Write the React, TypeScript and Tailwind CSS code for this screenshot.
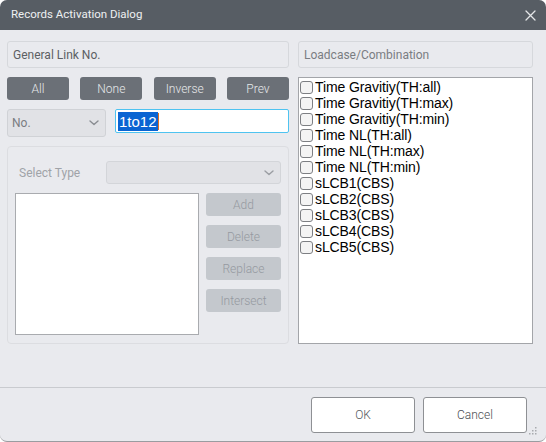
import React from "react";

const items = [
  "Time Gravitiy(TH:all)",
  "Time Gravitiy(TH:max)",
  "Time Gravitiy(TH:min)",
  "Time NL(TH:all)",
  "Time NL(TH:max)",
  "Time NL(TH:min)",
  "sLCB1(CBS)",
  "sLCB2(CBS)",
  "sLCB3(CBS)",
  "sLCB4(CBS)",
  "sLCB5(CBS)",
];

function Chevron({ color = "#8a8d92" }: { color?: string }) {
  return (
    <svg width="10" height="6" viewBox="0 0 10 6" fill="none">
      <path d="M1 1 L5 4.5 L9 1" stroke={color} strokeWidth="1.4" strokeLinecap="round" strokeLinejoin="round" />
    </svg>
  );
}

export default function App() {
  const ui = { fontFamily: 'Roboto, "Noto Sans", sans-serif' };
  const list = { fontFamily: '"Liberation Sans", Arial, sans-serif' };
  return (
    <div className="w-[546px] h-[442px] bg-white">
      <div
        className="w-[546px] h-[442px] bg-[#e9eaee] rounded-[7px] overflow-hidden flex flex-col relative border-b border-[#9a9ca0]"
        style={ui}
      >
        {/* Title bar */}
        <div className="h-[30px] bg-[#575d64] flex items-center justify-between pl-[11px] pr-[10px] shrink-0">
          <span className="text-[11.5px] text-[#eef0f2] leading-none">Records Activation Dialog</span>
          <svg width="11" height="11" viewBox="0 0 11 11">
            <path d="M1 1 L10 10 M10 1 L1 10" stroke="#e4e6e8" strokeWidth="1.3" strokeLinecap="round" />
          </svg>
        </div>

        {/* Body */}
        <div className="flex pl-[7px] pt-[11px] gap-[9px] h-[357px] shrink-0">
          {/* Left column */}
          <div className="w-[282px] flex flex-col">
            <div className="h-[27px] border border-[#d6d8dc] rounded-[3px] flex items-center px-[5px] text-[12px] text-[#5c5f63]">
              General Link No.
            </div>
            <div className="mt-[9px] flex justify-between">
              {["All", "None", "Inverse", "Prev"].map((b) => (
                <button
                  key={b}
                  className="w-[62px] h-[23px] bg-[#6b7077] rounded-[3px] text-[12px] font-light text-[#e6e8ea] flex items-center justify-center"
                >
                  {b}
                </button>
              ))}
            </div>
            <div className="mt-[9px] flex justify-between items-start">
              <div className="w-[99px] h-[28px] bg-[#e1e2e6] border border-[#d0d2d6] rounded-[3px] flex items-center justify-between pl-[4px] pr-[6px] text-[12px] text-[#7a7d82]">
                <span>No.</span>
                <Chevron />
              </div>
              <div className="w-[174px] h-[24px] bg-white border border-[#4fc3f0] rounded-[2px] flex items-center pl-[2px]">
                <span
                  className="bg-[#0a64d2] text-white text-[15px] leading-[19px] px-[1px]"
                  style={list}
                >
                  1to12
                </span>
                <span className="w-[1px] h-[17px] bg-[#e07020]" />
              </div>
            </div>
            <div className="mt-[9px] h-[198px] border border-[#dcdde1] rounded-[4px] px-[7px] pt-[14px] flex flex-col">
              <div className="flex items-center justify-between">
                <span className="pl-[4px] text-[12px] text-[#a0a3a8]">Select Type</span>
                <div className="w-[175px] h-[23px] bg-[#e1e2e6] border border-[#d3d5d9] rounded-[3px] flex items-center justify-end pr-[6px]">
                  <Chevron color="#9a9da2" />
                </div>
              </div>
              <div className="mt-[9px] flex justify-between">
                <div className="w-[184px] h-[142px] bg-white border border-[#a9abaf]" />
                <div className="w-[75px] flex flex-col gap-[9px]">
                  {["Add", "Delete", "Replace", "Intersect"].map((b) => (
                    <button
                      key={b}
                      className="h-[23px] bg-[#c4c8cd] rounded-[3px] text-[12px] font-light text-[#9599a0] flex items-center justify-center"
                    >
                      {b}
                    </button>
                  ))}
                </div>
              </div>
            </div>
          </div>

          {/* Right column */}
          <div className="w-[235px] flex flex-col">
            <div className="h-[27px] border border-[#d6d8dc] rounded-[3px] flex items-center px-[5px] text-[12px] text-[#7a7d82]">
              Loadcase/Combination
            </div>
            <div className="mt-[9px] h-[267px] bg-white border border-[#a3a5a9] pl-[1px] pt-[1px]" style={list}>
              {items.map((it) => (
                <div key={it} className="h-[16px] flex items-center">
                  <span className="w-[13px] h-[13px] rounded-[3px] border border-[#7d7f83] bg-[#f4f4f4] shrink-0" />
                  <span className="ml-[2px] text-[14px] leading-[16px] text-black tracking-[-0.1px]">{it}</span>
                </div>
              ))}
            </div>
          </div>
        </div>

        {/* Footer */}
        <div className="border-t border-[#c9cbcf] flex-1 flex justify-end items-start pt-[9px] pr-[19px] gap-[8px]">
          <button className="w-[104px] h-[36px] bg-white border border-[#8e9094] rounded-[3px] text-[12px] font-light text-[#5a5d62]">
            OK
          </button>
          <button className="w-[104px] h-[36px] bg-white border border-[#8e9094] rounded-[3px] text-[12px] font-light text-[#4a4d52]">
            Cancel
          </button>
        </div>

        {/* resize grip */}
        <svg className="absolute right-[9px] bottom-[6px]" width="8" height="8" viewBox="0 0 8 8">
          <rect x="6" y="0" width="1.5" height="1.5" fill="#a8aaae" />
          <rect x="3" y="3" width="1.5" height="1.5" fill="#a8aaae" />
          <rect x="6" y="3" width="1.5" height="1.5" fill="#a8aaae" />
          <rect x="0" y="6" width="1.5" height="1.5" fill="#a8aaae" />
          <rect x="3" y="6" width="1.5" height="1.5" fill="#a8aaae" />
          <rect x="6" y="6" width="1.5" height="1.5" fill="#a8aaae" />
        </svg>
      </div>
    </div>
  );
}
